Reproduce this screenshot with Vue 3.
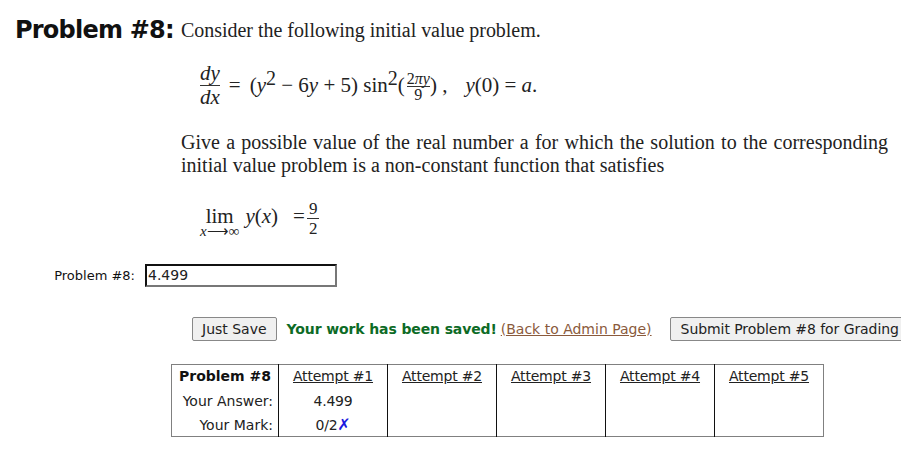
<script setup>
const attempts = [1, 2, 3, 4, 5]
</script>

<template>
  <main class="page">
    <section class="question">
      <h1 class="title">Problem #8:</h1>
      <div class="body">
        <p class="line intro">Consider the following initial value problem.</p>
        <div class="eq eq1">
          <span class="frac"><i class="num">dy</i><i class="den">dx</i></span>
          <span class="eqs">=</span>
          <span class="expr">(<i>y</i><sup>2</sup> − 6<i>y</i> + 5) sin<sup>2</sup>(</span>
          <span class="frac small"><span class="num">2<i>πy</i></span><span class="den">9</span></span>
          <span class="expr">) ,</span>
          <span class="expr cond"><i>y</i>(0) = <i>a</i>.</span>
        </div>
        <p class="para">Give a possible value of the real number a for which the solution to the corresponding initial value problem is a non-constant function that satisfies</p>
        <div class="eq eq2">
          <span class="lim">lim<small><i>x</i>⟶∞</small></span>
          <span class="expr"><i>y</i>(<i>x</i>)</span>
          <span class="eqs">=</span>
          <span class="frac half"><span class="num">9</span><span class="den">2</span></span>
        </div>
      </div>
    </section>

    <div class="answer">
      <label class="label" for="ans">Problem #8:</label>
      <input id="ans" class="input" value="4.499" />
    </div>

    <div class="actions">
      <button class="btn">Just Save</button>
      <strong class="saved">Your work has been saved!</strong>
      <a class="back">(Back to Admin Page)</a>
      <button class="btn submit">Submit Problem #8 for Grading</button>
    </div>

    <table class="grid">
      <tbody>
        <tr class="first">
          <th class="head">Problem #8</th>
          <td v-for="n in attempts" :key="n" class="cell"><u>Attempt #{{ n }}</u></td>
        </tr>
        <tr>
          <th class="rowlabel">Your Answer:</th>
          <td class="cell">4.499</td>
          <td v-for="n in 4" :key="n" class="cell"></td>
        </tr>
        <tr class="last">
          <th class="rowlabel">Your Mark:</th>
          <td class="cell">0/2<span class="x">✗</span></td>
          <td v-for="n in 4" :key="n" class="cell"></td>
        </tr>
      </tbody>
    </table>
  </main>
</template>

<style>
html, body { margin: 0; background: #fff; }
</style>

<style scoped>
.page {
  width: 901px;
  height: 450px;
  overflow: hidden;
  font-family: "DejaVu Sans", Verdana, sans-serif;
  font-size: 13px;
  color: #111;
}
.question { display: flex; padding: 15px 0 0 15px; }
.title { margin: 0; width: 166px; flex: none; font-size: 24px; line-height: 30px; font-weight: 700; color: #111; white-space: nowrap; font-family: "DejaVu Sans", sans-serif; letter-spacing: -0.78px; }
.body { font-family: "Liberation Serif", serif; font-size: 20px; color: #222; }
.line { margin: 0; line-height: 30px; letter-spacing: -0.03px; }
.eq { display: flex; align-items: center; white-space: nowrap; font-size: 21px; }
.eq1 { margin: 17px 0 0 19px; height: 46px; }
.frac { display: inline-flex; flex-direction: column; align-items: center; line-height: 23px; }
.frac .num { border-bottom: 1px solid #333; }
.small { font-size: 16px; line-height: 15px; margin: 3px 0 0 2px; }
.eqs { margin: 0 9px; }
.expr sup { font-size: 20px; line-height: 0; vertical-align: 7px; }
.cond { margin-left: 18px; }
.para { margin: 23px 0 0; width: 707px; line-height: 23px; font-size: 20px; text-align: justify; }
.eq2 { margin: 28px 0 0 19px; height: 44px; align-items: flex-start; line-height: 22px; }
.lim { display: inline-flex; flex-direction: column; align-items: center; line-height: 22px; margin-right: 6px; }
.lim small { font-size: 15px; line-height: 14px; margin-top: -3px; }
.eq2 .eqs { margin: 0 15px; }
.half { font-size: 17px; line-height: 19px; margin: -6px 0 0 -13px; }
.half .num { padding: 0 2px; }
.answer { display: flex; align-items: center; margin-top: 14px; height: 24px; }
.label { width: 135px; text-align: right; margin-right: 10px; flex: none; font-size: 13px; }
.input {
  box-sizing: border-box;
  width: 192px;
  height: 23px;
  padding: 0 1px;
  border: 2px solid;
  border-color: #111 #777 #777 #111;
  font: 14px "DejaVu Sans", sans-serif;
  color: #222;
  outline: none;
  background: #fff;
}
.actions { display: flex; align-items: center; margin: 30px 0 0 192px; height: 24px; white-space: nowrap; }
.btn {
  box-sizing: border-box;
  height: 24px;
  padding: 0 9px;
  border: 1px solid #888;
  border-radius: 2px;
  background: #f0f0f0;
  font: 14px "DejaVu Sans", sans-serif;
  color: #222;
  flex: none;
}
.saved { margin-left: 10px; color: #0d6b26; font-size: 14px; letter-spacing: -0.12px; }
.back { margin-left: 4px; color: #8a5a3c; font-size: 14px; text-decoration: underline; }
.submit { margin-left: 18px; letter-spacing: -0.07px; padding: 0 10px; }
.grid {
  border-collapse: collapse;
  margin: 23px 0 0 171px;
  table-layout: fixed;
  font-size: 14px;
  color: #222;
  border: 1px solid #808080;
}
.head { width: 106px; padding: 0; text-align: center; font-weight: 700; height: 24px; border-right: 1px solid #111; font-size: 14px; color: #111; }
.rowlabel { padding: 0 5px 0 0; text-align: right; font-weight: 400; height: 24px; border-right: 1px solid #111; }
.cell { width: 108px; padding: 0; text-align: center; border-right: 1px solid #111; letter-spacing: -0.2px; }
.cell:last-child { border-right: 0; }
.first .head { height: 22px; padding-bottom: 2px; }
.first .cell { padding-bottom: 2px; }
.last .rowlabel { height: 23px; }
.x { color: #1a1ae0; font-weight: 700; font-size: 16px; line-height: 0; }
</style>
